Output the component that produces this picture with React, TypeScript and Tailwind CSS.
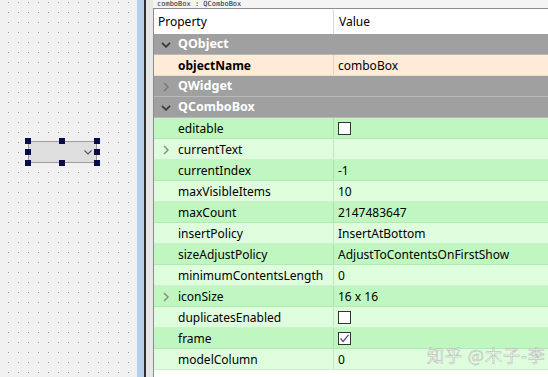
import React from "react"

type Row =
  | { kind: "group"; name: string; open: boolean }
  | {
      kind: "prop"
      name: string
      value?: string
      check?: "on" | "off"
      more?: boolean
      tone: "peach" | "dark" | "light"
      bold?: boolean
    }

const rows: Row[] = [
  { kind: "group", name: "QObject", open: true },
  { kind: "prop", name: "objectName", value: "comboBox", tone: "peach", bold: true },
  { kind: "group", name: "QWidget", open: false },
  { kind: "group", name: "QComboBox", open: true },
  { kind: "prop", name: "editable", check: "off", tone: "dark" },
  { kind: "prop", name: "currentText", more: true, tone: "light" },
  { kind: "prop", name: "currentIndex", value: "-1", tone: "dark" },
  { kind: "prop", name: "maxVisibleItems", value: "10", tone: "light" },
  { kind: "prop", name: "maxCount", value: "2147483647", tone: "dark" },
  { kind: "prop", name: "insertPolicy", value: "InsertAtBottom", tone: "light" },
  { kind: "prop", name: "sizeAdjustPolicy", value: "AdjustToContentsOnFirstShow", tone: "dark" },
  { kind: "prop", name: "minimumContentsLength", value: "0", tone: "light" },
  { kind: "prop", name: "iconSize", value: "16 x 16", more: true, tone: "dark" },
  { kind: "prop", name: "duplicatesEnabled", check: "off", tone: "light" },
  { kind: "prop", name: "frame", check: "on", tone: "dark" },
  { kind: "prop", name: "modelColumn", value: "0", tone: "light" },
]

const toneClass = {
  peach: "bg-[#feecd8]",
  dark: "bg-[#c0f7c0]",
  light: "bg-[#defddd]",
}

function Chevron({ open, className }: { open: boolean; className: string }) {
  return open ? (
    <svg width="10" height="6" viewBox="0 0 10 6" className={className}>
      <path d="M1 0.8 L5 4.8 L9 0.8" fill="none" stroke="currentColor" strokeWidth="1.8" />
    </svg>
  ) : (
    <svg width="6" height="10" viewBox="0 0 6 10" className={className}>
      <path d="M1 1 L5 5 L1 9" fill="none" stroke="currentColor" strokeWidth="1.5" />
    </svg>
  )
}

function CheckBox({ checked }: { checked: boolean }) {
  return (
    <span className="flex h-[13px] w-[13px] items-center justify-center border border-[#333] bg-white">
      {checked && (
        <svg width="11" height="11" viewBox="0 0 11 11">
          <path d="M1.5 5.5 L4.2 8.5 L9.5 1.8" fill="none" stroke="#55557a" strokeWidth="1.3" />
        </svg>
      )}
    </span>
  )
}

function Canvas() {
  return (
    <div className="relative h-full w-[137px] shrink-0 bg-[#f0f0f0]">
      <svg width="137" height="377" className="absolute inset-0">
        <defs>
          <pattern id="dots" x="8" y="2" width="10" height="10" patternUnits="userSpaceOnUse">
            <rect width="1" height="1" fill="#9a9a9a" />
          </pattern>
        </defs>
        <rect width="137" height="377" fill="url(#dots)" />
      </svg>

      {/* selected combo box on the form */}
      <div className="absolute left-[28px] top-[141px] flex h-[22px] w-[69px] items-center justify-end border border-[#9c9c9c] bg-[#dedede] pr-[4px]">
        <svg width="8" height="5" viewBox="0 0 8 5">
          <path d="M0.5 0.5 L4 4 L7.5 0.5" fill="none" stroke="#555" strokeWidth="1.1" />
        </svg>
      </div>
      <span className="absolute left-[25px] top-[138px] h-[6px] w-[6px] bg-[#0a0a4a]" />
      <span className="absolute left-[59px] top-[138px] h-[6px] w-[6px] bg-[#0a0a4a]" />
      <span className="absolute left-[94px] top-[138px] h-[6px] w-[6px] bg-[#0a0a4a]" />
      <span className="absolute left-[25px] top-[149px] h-[6px] w-[6px] bg-[#0a0a4a]" />
      <span className="absolute left-[94px] top-[149px] h-[6px] w-[6px] bg-[#0a0a4a]" />
      <span className="absolute left-[25px] top-[160px] h-[6px] w-[6px] bg-[#0a0a4a]" />
      <span className="absolute left-[59px] top-[160px] h-[6px] w-[6px] bg-[#0a0a4a]" />
      <span className="absolute left-[94px] top-[160px] h-[6px] w-[6px] bg-[#0a0a4a]" />
    </div>
  )
}

export default function App() {
  return (
    <div className="relative flex h-[377px] w-[548px] overflow-hidden bg-[#f0f0f0] font-['Noto_Sans',sans-serif] text-[12px] text-black">
      <Canvas />
      <div className="w-[7px] shrink-0 bg-[#b6d1ea]" />
      <div className="w-[2px] shrink-0 bg-[#2e2e2e]" />

      <div className="flex min-w-0 flex-1 flex-col bg-[#e6e6e6] pl-[7px]">
        <div className="flex h-[8px] items-end overflow-hidden bg-[#f4f4f4] pl-[4px]">
          <span className="font-['DejaVu_Sans_Mono',monospace] text-[7px] leading-[8px] text-[#222]">
            comboBox : QComboBox
          </span>
        </div>

        <div className="flex-1 border-l border-t border-[#8c8c8c] bg-white">
          <div className="flex h-[25px] items-center pt-px">
            <div className="flex h-full w-[180px] shrink-0 items-center border-r border-[#dadada] pl-[4px]">
              Property
            </div>
            <div className="pl-[5px]">Value</div>
          </div>

          {rows.map((row) =>
            row.kind === "group" ? (
              <div
                key={row.name}
                className="flex h-[21px] items-center border-b border-[#b9b9b9] bg-[#a0a0a0] pt-px font-bold text-white"
              >
                <div className="flex w-[24px] shrink-0 items-center justify-center">
                  <Chevron open={row.open} className={row.open ? "text-[#3a3a3a]" : "text-[#7a7a7a]"} />
                </div>
                <span className="text-[12.5px]">{row.name}</span>
              </div>
            ) : (
              <div
                key={row.name}
                className={`flex h-[21px] items-center border-b border-black/[0.06] ${toneClass[row.tone]}`}
              >
                <div
                  className={`flex h-full w-[180px] shrink-0 items-center border-r border-black/10 pt-px ${row.bold ? "font-bold" : ""}`}
                >
                  <div className="flex w-[24px] shrink-0 items-center justify-center">
                    {row.more && <Chevron open={false} className="text-[#8a8a8a]" />}
                  </div>
                  <span>{row.name}</span>
                </div>
                <div className="flex items-center whitespace-nowrap pl-[4px] pt-px">
                  {row.check ? <CheckBox checked={row.check === "on"} /> : row.value}
                </div>
              </div>
            ),
          )}
        </div>
      </div>

      <div className="pointer-events-none absolute left-[427px] top-[342px] font-['Noto_Sans_CJK_SC',sans-serif] text-[17px] tracking-[1px] text-white/60 [-webkit-text-stroke:0.5px_#b4b4b4]">
        知乎 @木子-李
      </div>
    </div>
  )
}
